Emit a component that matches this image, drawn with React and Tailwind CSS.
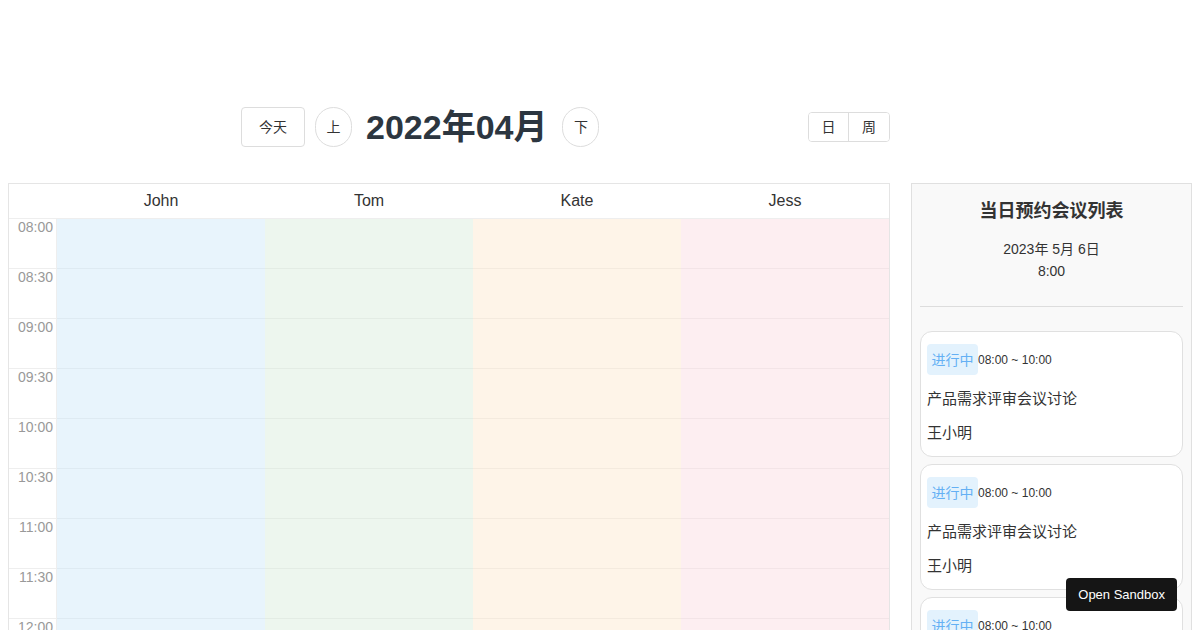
import { useState } from 'react'

const people = [
  { name: 'John', bg: 'bg-[#e8f4fc]' },
  { name: 'Tom', bg: 'bg-[#edf6ee]' },
  { name: 'Kate', bg: 'bg-[#fef4e8]' },
  { name: 'Jess', bg: 'bg-[#fdeef1]' },
]

const slots = ['08:00', '08:30', '09:00', '09:30', '10:00', '10:30', '11:00', '11:30', '12:00']

const bookings = [
  { tag: '进行中', time: '08:00 ~ 10:00', title: '产品需求评审会议讨论', who: '王小明' },
  { tag: '进行中', time: '08:00 ~ 10:00', title: '产品需求评审会议讨论', who: '王小明' },
  { tag: '进行中', time: '08:00 ~ 10:00', title: '产品需求评审会议讨论', who: '王小明' },
]

export default function App() {
  const [view, setView] = useState('day')

  return (
    <div className="h-[630px] overflow-hidden bg-white text-[#333] font-['Liberation_Sans','Noto_Sans_CJK_SC',sans-serif]">
      <div className="pt-[107px] flex">
        <div className="w-[882px] ml-2">
          {/* Toolbar */}
          <div className="flex items-center justify-between pl-[233px] h-10">
            <div className="flex items-center">
              <button className="w-16 h-10 rounded border border-[#ddd] bg-white text-sm text-[#333]">今天</button>
              <button className="ml-[10px] w-[37px] h-[40px] rounded-full border border-[#ddd] bg-white text-sm">上</button>
              <h1 className="ml-[14px] text-[34px] font-bold text-[#2c3640] leading-none">2022年04月</h1>
              <button className="ml-[15px] w-[37px] h-[40px] rounded-full border border-[#ddd] bg-white text-sm">下</button>
            </div>
            <div className="flex rounded border border-[#ddd] overflow-hidden h-[30px] text-sm">
              <button
                onClick={() => setView('day')}
                className={`w-10 ${view === 'day' ? 'bg-white' : 'bg-gray-50'} border-r border-[#ddd]`}
              >
                日
              </button>
              <button onClick={() => setView('week')} className={`w-10 ${view === 'week' ? 'bg-white' : 'bg-white'}`}>
                周
              </button>
            </div>
          </div>

          {/* Calendar */}
          <div className="mt-[36px] border border-[#e5e5e5] border-b-0">
            <div className="flex h-[35px] items-center border-b border-[#eee]">
              <div className="w-12 shrink-0" />
              {people.map((p) => (
                <div key={p.name} className="flex-1 text-center text-base text-[#333]">
                  {p.name}
                </div>
              ))}
            </div>
            <div className="flex">
              <div className="w-12 shrink-0 border-r border-[#eee]">
                {slots.map((s) => (
                  <div key={s} className="h-[50px] border-b border-[#eee] text-right pr-[3px] text-sm text-[#999] leading-none pt-[1px]">
                    {s}
                  </div>
                ))}
              </div>
              {people.map((p) => (
                <div key={p.name} className={`flex-1 ${p.bg}`}>
                  {slots.map((s) => (
                    <div key={s} className="h-[50px] border-b border-black/[0.04]" />
                  ))}
                </div>
              ))}
            </div>
          </div>
        </div>

        {/* Sidebar */}
        <div className="ml-[21px] mt-[76px] w-[281px] border border-[#e0e0e0] bg-[#f9f9f9] px-2">
          <h2 className="mt-[13px] text-center text-lg font-bold text-[#333]">当日预约会议列表</h2>
          <div className="mt-[13px] text-center text-sm leading-[22px] text-[#333]">
            <div>2023年 5月 6日</div>
            <div>8:00</div>
          </div>
          <div className="mt-[24px] border-t border-[#ddd]" />
          <div className="mt-[24px] flex flex-col gap-[7px]">
            {bookings.map((b, i) => (
              <div key={i} className="h-[126px] rounded-xl border border-[#e0e0e0] bg-white px-[6px] pt-3">
                <div className="flex items-center">
                  <span className="w-[51px] h-[31px] rounded bg-[#e3f2fd] text-[#64b0f4] text-sm flex items-center justify-center">
                    {b.tag}
                  </span>
                  <span className="text-xs text-[#333]">{b.time}</span>
                </div>
                <div className="mt-[13px] text-[15px] text-[#333]">{b.title}</div>
                <div className="mt-[11px] text-[15px] text-[#333]">{b.who}</div>
              </div>
            ))}
          </div>
        </div>
      </div>

      <button className="fixed right-[23px] bottom-[19px] h-[33px] px-3 rounded bg-[#151515] text-white text-[13px]">
        Open Sandbox
      </button>
    </div>
  )
}
